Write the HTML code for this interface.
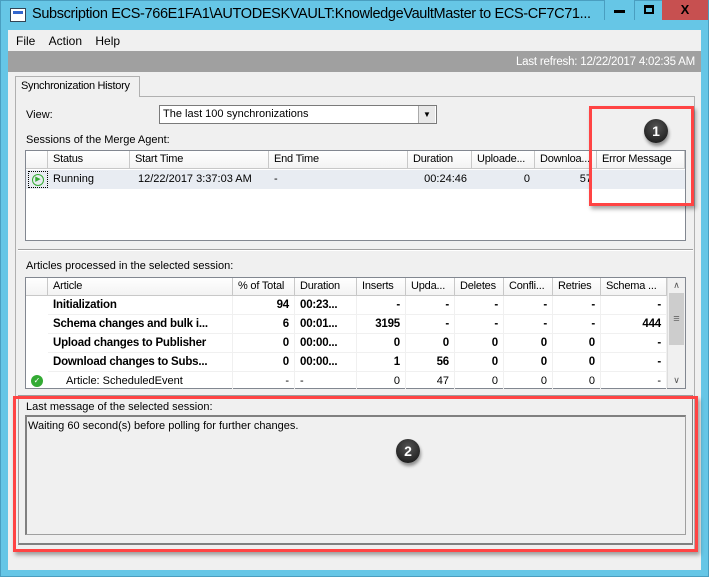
<!DOCTYPE html>
<html><head><style>
*{box-sizing:border-box;margin:0;padding:0}
body{width:709px;height:579px;background:#fff;font-family:"Liberation Sans",sans-serif;font-size:11px;color:#000;position:relative;overflow:hidden}
.a{position:absolute}
.win{left:0;top:0;width:709px;height:577px;background:#66c6e6;border:1px solid #4a9ec0}
.title{left:32px;top:6px;font-size:14.5px;letter-spacing:-0.35px;color:#000;white-space:nowrap;width:568px;overflow:hidden}
.client{left:8px;top:30px;width:693px;height:540px;background:#f0f0f0}
.gray{left:8px;top:51px;width:693px;height:21px;background:#a0a0a0;color:#fff;text-align:right;padding:5px 6px 0 0;font-size:11.5px;letter-spacing:-0.2px}
.grid{background:#fff;border:1px solid #828790}
.hd{position:absolute;top:0;height:18px;border-right:1px solid #c8c8c8;border-bottom:1px solid #c8c8c8;background:linear-gradient(#fff,#f3f3f3);padding:2px 5px;white-space:nowrap;overflow:hidden;letter-spacing:-0.2px}
.c{position:absolute;height:19px;padding:3px 5px;white-space:nowrap;border-right:1px solid #f0f0f0;border-bottom:1px solid #f0f0f0;overflow:hidden}
.r{text-align:right}
.b{font-weight:bold;font-size:11.5px;letter-spacing:-0.2px}
.red{border:3px solid #f44;box-shadow:2px 3px 4px rgba(0,0,0,.35)}
.badge{width:24px;height:24px;border-radius:50%;background:radial-gradient(circle at 50% 35%,#555,#111);color:#fff;font-weight:bold;font-size:14px;text-align:center;line-height:24px;box-shadow:1px 3px 3px rgba(0,0,0,.4)}
</style></head><body>
<div class="a win"></div>
<div class="a" style="left:10px;top:8px;width:16px;height:14px;background:#fff;border:1px solid #345"><div style="margin:2px;height:3px;background:#36c"></div></div>
<div class="a title">Subscription ECS-766E1FA1\AUTODESKVAULT:KnowledgeVaultMaster to ECS-CF7C71...</div>
<div class="a" style="left:604px;top:0;width:30px;height:20px;background:#66c6e6;border-left:1px solid #4a9ec0"><div style="margin:10px auto 0;width:11px;height:3px;background:#000"></div></div>
<div class="a" style="left:634px;top:0;width:28px;height:20px;border-left:1px solid #4a9ec0"><div style="margin:5px auto;width:10px;height:9px;border:2px solid #000;border-top-width:3px"></div></div>
<div class="a" style="left:662px;top:0;width:46px;height:20px;background:#c75050;text-align:center;font-weight:bold;font-size:13px;line-height:20px">X</div>
<div class="a client"></div>
<div class="a" style="left:16px;top:34px;font-size:12px">File&nbsp;&nbsp;&nbsp;&nbsp;Action&nbsp;&nbsp;&nbsp;&nbsp;Help</div>
<div class="a gray">Last refresh: 12/22/2017 4:02:35 AM</div>
<div class="a" style="left:15px;top:96px;width:680px;height:455px;border:1px solid #b0b0b0;background:#f0f0f0"></div>
<div class="a" style="left:15px;top:76px;width:125px;height:21px;background:#f0f0f0;border:1px solid #b0b0b0;border-bottom:none;padding:3px 5px;white-space:nowrap;letter-spacing:-0.3px">Synchronization History</div>
<div class="a" style="left:26px;top:109px">View:</div>
<div class="a" style="left:159px;top:105px;width:278px;height:19px;background:#fff;border:1px solid #7a7a7a;padding:2px 3px">The last 100 synchronizations</div>
<div class="a" style="left:418px;top:106px;width:17px;height:17px;background:#e8e8e8;border-left:1px solid #aaa;text-align:center;font-size:8px;line-height:17px">▼</div>
<div class="a" style="left:26px;top:134px">Sessions of the Merge Agent:</div>
<div class="a grid" style="left:25px;top:150px;width:661px;height:91px">
<div class="hd" style="left:0;width:22px"></div>
<div class="hd" style="left:22px;width:82px">Status</div>
<div class="hd" style="left:104px;width:139px">Start Time</div>
<div class="hd" style="left:243px;width:139px">End Time</div>
<div class="hd" style="left:382px;width:64px">Duration</div>
<div class="hd" style="left:446px;width:63px">Uploade...</div>
<div class="hd" style="left:509px;width:62px">Downloa...</div>
<div class="hd" style="left:571px;width:88px">Error Message</div>
<div style="position:absolute;left:0;top:19px;width:659px;height:19px;background:#e8ecf2"></div>
<div style="position:absolute;left:2px;top:20px;width:20px;height:17px;border:1px dotted #000"><div style="margin:2px auto;width:12px;height:12px;border:1.5px solid #3a3;border-radius:50%;font-size:7px;color:#3a3;text-align:center;line-height:10px">▶</div></div>
<div class="c" style="left:22px;top:19px;border:none">Running</div>
<div class="c" style="left:104px;top:19px;border:none;padding-left:8px">12/22/2017 3:37:03 AM</div>
<div class="c" style="left:243px;top:19px;border:none">-</div>
<div class="c r" style="left:382px;top:19px;width:64px;border:none">00:24:46</div>
<div class="c r" style="left:446px;top:19px;width:63px;border:none">0</div>
<div class="c r" style="left:509px;top:19px;width:62px;border:none">57</div>
</div>
<div class="a" style="left:18px;top:249px;width:675px;height:2px;border-top:1px solid #a0a0a0;border-bottom:1px solid #fff"></div>
<div class="a" style="left:26px;top:260px">Articles processed in the selected session:</div>
<div class="a grid" style="left:25px;top:277px;width:661px;height:112px">
<div class="hd" style="left:0;width:22px"></div>
<div class="hd" style="left:22px;width:185px">Article</div>
<div class="hd" style="left:207px;width:62px">% of Total</div>
<div class="hd" style="left:269px;width:62px">Duration</div>
<div class="hd" style="left:331px;width:49px">Inserts</div>
<div class="hd" style="left:380px;width:49px">Upda...</div>
<div class="hd" style="left:429px;width:49px">Deletes</div>
<div class="hd" style="left:478px;width:49px">Confli...</div>
<div class="hd" style="left:527px;width:48px">Retries</div>
<div class="hd" style="left:575px;width:66px">Schema ...</div>
<div style="position:absolute;left:641px;top:0;width:18px;height:110px;background:#f0f0f0;border-left:1px solid #ddd">
<div style="text-align:center;font-size:9px;color:#555;margin-top:2px">∧</div>
<div style="margin:2px 1px;height:52px;background:#cdcdcd;text-align:center;color:#666;line-height:52px">≡</div>
<div style="position:absolute;bottom:2px;width:17px;text-align:center;font-size:9px;color:#555">∨</div></div>
<div id="rows"></div>
</div>
<script>
var cols=[[22,185,0],[207,62,1],[269,62,0],[331,49,1],[380,49,1],[429,49,1],[478,49,1],[527,48,1],[575,66,1]];
var rows=[[1,"Initialization","94","00:23...","-","-","-","-","-","-"],
[1,"Schema changes and bulk i...","6","00:01...","3195","-","-","-","-","444"],
[1,"Upload changes to Publisher","0","00:00...","0","0","0","0","0","-"],
[1,"Download changes to Subs...","0","00:00...","1","56","0","0","0","-"],
[0,"Article: ScheduledEvent","-","-","0","47","0","0","0","-"]];
var h="";rows.forEach(function(r,i){var t=18+i*19;cols.forEach(function(c,j){h+='<div class="c'+(c[2]?' r':'')+(r[0]?' b':'')+'" style="left:'+c[0]+'px;top:'+t+'px;width:'+c[1]+'px;'+(j==0&&!r[0]?'padding-left:18px':'')+'">'+r[j+1]+'</div>'});});
h+='<div style="position:absolute;left:5px;top:97px;width:12px;height:12px;border-radius:50%;background:#3a3;color:#fff;font-size:8px;text-align:center;line-height:12px">✓</div>';
document.getElementById("rows").innerHTML=h;
</script>
<div class="a" style="left:18px;top:395px;width:675px;height:150px;border:1px solid #a0a0a0;border-right-color:#808080;border-bottom:2px solid #808080"></div>
<div class="a" style="left:26px;top:401px">Last message of the selected session:</div>
<div class="a" style="left:25px;top:415px;width:661px;height:120px;border:1px solid #a0a0a0;border-top:2px solid #808080;border-left:2px solid #808080;background:#f0f0f0;padding:3px 1px">Waiting 60 second(s) before polling for further changes.</div>
<div class="a red" style="left:589px;top:106px;width:105px;height:100px"></div>
<div class="a red" style="left:13px;top:396px;width:685px;height:156px"></div>
<div class="a badge" style="left:644px;top:119px">1</div>
<div class="a badge" style="left:396px;top:439px">2</div>
</body></html>
